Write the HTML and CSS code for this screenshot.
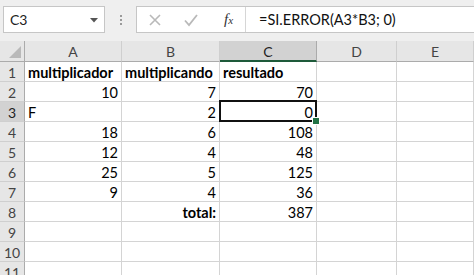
FILE: index.html
```html
<!DOCTYPE html>
<html lang="es">
<head>
    <meta charset="UTF-8">
    <meta name="viewport" content="width=device-width, initial-scale=1.0">
    <title>Libro1 - Excel</title>
    <link rel="stylesheet" href="styles.css">
</head>
<body>
    <div class="formula-bar">
        <div class="name-box">
            <span>C3</span>
            <svg class="arrow" width="8" height="5" viewBox="0 0 8 5"><path d="M0 0h8L4 4.5z" fill="#555"/></svg>
        </div>
        <div class="grip">
            <span></span><span></span><span></span>
        </div>
        <div class="formula-box">
            <div class="buttons">
                <svg width="14" height="14" viewBox="0 0 14 14"><path d="M2 2l10 10M12 2L2 12" stroke="#b9b9b9" stroke-width="1.6" fill="none"/></svg>
                <svg width="16" height="14" viewBox="0 0 16 14"><path d="M2 7.5l4 4.5L14 2" stroke="#b9b9b9" stroke-width="1.8" fill="none"/></svg>
                <span class="fx">f<sub>x</sub></span>
            </div>
            <div class="formula">=SI.ERROR(A3*B3; 0)</div>
        </div>
    </div>

    <div class="sheet">
        <div class="corner"></div>
        <div class="col-head">A</div>
        <div class="col-head">B</div>
        <div class="col-head active">C</div>
        <div class="col-head">D</div>
        <div class="col-head">E</div>

        <div class="row-head">1</div>
        <div class="cell bold">multiplicador</div>
        <div class="cell bold">multiplicando</div>
        <div class="cell bold">resultado</div>
        <div class="cell"></div>
        <div class="cell"></div>

        <div class="row-head">2</div>
        <div class="cell num">10</div>
        <div class="cell num">7</div>
        <div class="cell num">70</div>
        <div class="cell"></div>
        <div class="cell"></div>

        <div class="row-head active">3</div>
        <div class="cell">F</div>
        <div class="cell num">2</div>
        <div class="cell num selected">0</div>
        <div class="cell"></div>
        <div class="cell"></div>

        <div class="row-head">4</div>
        <div class="cell num">18</div>
        <div class="cell num">6</div>
        <div class="cell num">108</div>
        <div class="cell"></div>
        <div class="cell"></div>

        <div class="row-head">5</div>
        <div class="cell num">12</div>
        <div class="cell num">4</div>
        <div class="cell num">48</div>
        <div class="cell"></div>
        <div class="cell"></div>

        <div class="row-head">6</div>
        <div class="cell num">25</div>
        <div class="cell num">5</div>
        <div class="cell num">125</div>
        <div class="cell"></div>
        <div class="cell"></div>

        <div class="row-head">7</div>
        <div class="cell num">9</div>
        <div class="cell num">4</div>
        <div class="cell num">36</div>
        <div class="cell"></div>
        <div class="cell"></div>

        <div class="row-head">8</div>
        <div class="cell"></div>
        <div class="cell num bold">total:</div>
        <div class="cell num">387</div>
        <div class="cell"></div>
        <div class="cell"></div>

        <div class="row-head">9</div>
        <div class="cell"></div>
        <div class="cell"></div>
        <div class="cell"></div>
        <div class="cell"></div>
        <div class="cell"></div>

        <div class="row-head">10</div>
        <div class="cell"></div>
        <div class="cell"></div>
        <div class="cell"></div>
        <div class="cell"></div>
        <div class="cell"></div>

        <div class="row-head">11</div>
        <div class="cell"></div>
        <div class="cell"></div>
        <div class="cell"></div>
        <div class="cell"></div>
        <div class="cell"></div>
    </div>
</body>
</html>
```

FILE: styles.css
```css
*{
    box-sizing: border-box;
    font-family: 'Lato', sans-serif;
}
body{
    margin: 0;
    padding: 0;
    background: #ffffff;
    overflow: hidden;
    color: #000;
}

/* top bar with name box and formula */
.formula-bar{
    height: 41px;
    background: #efefef;
    display: flex;
    align-items: flex-start;
    padding: 6px 0 0 3px;
}
.name-box{
    width: 102px;
    height: 27px;
    background: #fff;
    border: 1px solid #c6c6c6;
    display: flex;
    align-items: center;
    justify-content: space-between;
    padding: 0 6px 0 6px;
    font-size: 14px;
    color: #222;
}
.name-box .arrow{
    margin-top: 1px;
}
.grip{
    width: 31px;
    height: 27px;
    display: flex;
    flex-direction: column;
    align-items: center;
    justify-content: center;
    gap: 2px;
}
.grip span{
    width: 2px;
    height: 2px;
    background: #9a9a9a;
}
.formula-box{
    flex: 1;
    height: 27px;
    background: #fff;
    border: 1px solid #c6c6c6;
    border-right: none;
    display: flex;
}
.buttons{
    width: 109px;
    display: flex;
    align-items: center;
    padding-left: 11px;
    gap: 21px;
    border-right: 1px solid #d6d6d6;
}
.fx{
    font-family: 'Liberation Serif', serif;
    font-style: italic;
    font-size: 15px;
    color: #333;
    margin-left: 4px;
}
.fx sub{
    font-family: 'Liberation Serif', serif;
    font-size: 11px;
    vertical-align: 0;
}
.formula{
    padding-left: 13px;
    display: flex;
    align-items: center;
    font-size: 14.5px;
    color: #111;
}

/* grid */
.sheet{
    display: grid;
    grid-template-columns: 25px 97px 98px 97px 80px 1fr;
    grid-template-rows: 21px;
    grid-auto-rows: 20px;
}
.corner, .col-head, .row-head{
    background: #e6e6e6;
    color: #444;
    font-size: 14px;
    display: flex;
    align-items: center;
    justify-content: center;
}
.corner{
    border-right: 1px solid #ababab;
    border-bottom: 1px solid #ababab;
    position: relative;
}
.corner::after{
    content: "";
    position: absolute;
    right: 3px;
    bottom: 3px;
    border-left: 12px solid transparent;
    border-bottom: 12px solid #b9b9b9;
}
.col-head{
    border-right: 1px solid #cfcfcf;
    border-bottom: 1px solid #ababab;
    padding-top: 1px;
}
.col-head.active{
    background: #d2d2d2;
    border-bottom: 2px solid #1e5a3a;
    border-right-color: #ababab;
    color: #222;
}
.row-head{
    border-right: 1px solid #ababab;
    border-bottom: 1px solid #cfcfcf;
    padding-top: 1px;
}
.row-head.active{
    background: #d2d2d2;
    color: #222;
}
.cell{
    border-right: 1px solid #d4d4d4;
    border-bottom: 1px solid #d4d4d4;
    font-size: 14.5px;
    padding: 1px 3px 0 3px;
    display: flex;
    align-items: center;
    white-space: nowrap;
}
.num{
    justify-content: flex-end;
}
.bold{
    font-weight: bold;
}
.selected{
    position: relative;
}
.selected::before{
    content: "";
    position: absolute;
    top: -2px;
    left: -1px;
    right: -1px;
    bottom: -1px;
    border: 2px solid #111;
}
.selected::after{
    content: "";
    position: absolute;
    right: -4px;
    bottom: -4px;
    width: 6px;
    height: 6px;
    background: #217346;
    border: 1px solid #fff;
}
```
